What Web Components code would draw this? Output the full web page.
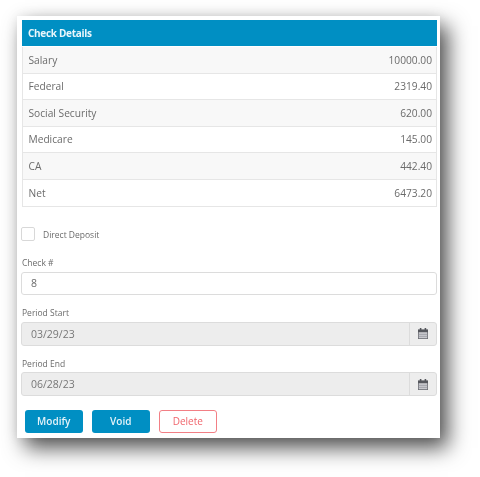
<!DOCTYPE html>
<html>
<head>
<meta charset="utf-8">
<style>
  html, body { margin: 0; padding: 0; background: #fff; }
  body { width: 480px; height: 477px; overflow: hidden; font-family: "Open Sans", "Liberation Sans", sans-serif; }
</style>
</head>
<body>
<check-panel>
  <details-table title-text="Check Details">
    <detail-row label="Salary" value="10000.00"></detail-row>
    <detail-row label="Federal" value="2319.40"></detail-row>
    <detail-row label="Social Security" value="620.00"></detail-row>
    <detail-row label="Medicare" value="145.00"></detail-row>
    <detail-row label="CA" value="442.40"></detail-row>
    <detail-row label="Net" value="6473.20" last></detail-row>
  </details-table>
  <check-box label="Direct Deposit"></check-box>
  <text-field label="Check #" value="8"></text-field>
  <date-field label="Period Start" value="03/29/23"></date-field>
  <date-field label="Period End" value="06/28/23"></date-field>
  <button-row>
    <app-button>Modify</app-button>
    <app-button>Void</app-button>
    <app-button kind="danger">Delete</app-button>
  </button-row>
</check-panel>

<script>
class CheckPanel extends HTMLElement {
  constructor () {
    super()
    this.shadow = this.attachShadow({ mode: 'open' })
  }

  connectedCallback () {
    this.shadow.innerHTML = /* html */`
      <style>
        :host{
          display: block;
          margin: 16px 0 0 17px;
          width: 423px;
          height: 422px;
          box-sizing: border-box;
          padding: 4px 3px 0 4px;
          background: #fff;
          box-shadow: 8px 10px 20px rgba(0, 0, 0, 0.68), 0 0 12px rgba(0, 0, 0, 0.08);
          font-family: "Open Sans", "Liberation Sans", sans-serif;
        }
        .inner{
          display: flex;
          flex-direction: column;
          filter: blur(0.35px);
        }
      </style>
      <div class="inner"><slot></slot></div>
    `
  }
}

class DetailsTable extends HTMLElement {
  constructor () {
    super()
    this.shadow = this.attachShadow({ mode: 'open' })
  }

  connectedCallback () {
    this.shadow.innerHTML = /* html */`
      <style>
        :host{
          display: block;
          margin-left: 1px;
        }
        .header{
          background: #008fc3;
          color: #eaf6fb;
          font-size: 10px;
          font-weight: 700;
          letter-spacing: -0.3px;
          height: 26px;
          line-height: 27px;
          padding-left: 6px;
          margin-bottom: 1px;
        }
        .body{
          border: solid #e6e6e6;
          border-width: 0 1px 1px 1px;
        }
        ::slotted(detail-row:nth-child(odd)){
          background: #f8f8f8;
        }
      </style>
      <div class="header">${this.getAttribute('title-text')}</div>
      <div class="body"><slot></slot></div>
    `
  }
}

class DetailRow extends HTMLElement {
  constructor () {
    super()
    this.shadow = this.attachShadow({ mode: 'open' })
  }

  connectedCallback () {
    this.shadow.innerHTML = /* html */`
      <style>
        :host{
          display: flex;
          justify-content: space-between;
          align-items: center;
          box-sizing: border-box;
          height: 26.5px;
          padding: 0 4px 0 5.5px;
          border-bottom: 1px solid #e6e6e6;
          color: #6b6b6b;
          font-size: 10.2px;
        }
        :host([last]){
          border-bottom: 0;
        }
      </style>
      <span>${this.getAttribute('label')}</span>
      <span>${this.getAttribute('value')}</span>
    `
  }
}

class CheckBox extends HTMLElement {
  constructor () {
    super()
    this.shadow = this.attachShadow({ mode: 'open' })
  }

  connectedCallback () {
    this.shadow.innerHTML = /* html */`
      <style>
        :host{
          display: flex;
          align-items: center;
          gap: 8px;
          margin-top: 20px;
          height: 14px;
          color: #6b6b6b;
          font-size: 8.5px;
        }
        .box{
          box-sizing: border-box;
          width: 14px;
          height: 14px;
          border: 1px solid #d8d8d8;
          border-radius: 2px;
          background: #fff;
        }
      </style>
      <div class="box"></div>
      <span>${this.getAttribute('label')}</span>
    `
  }
}

class TextField extends HTMLElement {
  constructor () {
    super()
    this.shadow = this.attachShadow({ mode: 'open' })
  }

  connectedCallback () {
    this.shadow.innerHTML = /* html */`
      <style>
        :host{
          display: block;
          margin-top: 16px;
          color: #6b6b6b;
        }
        label{
          display: block;
          font-size: 8.5px;
          line-height: 12px;
          margin: 0 0 3px 1px;
        }
        .input{
          box-sizing: border-box;
          height: 23px;
          border: 1px solid #dcdcdc;
          border-radius: 3px;
          background: #fff;
          font-size: 10.5px;
          line-height: 21px;
          padding-left: 9px;
        }
      </style>
      <label>${this.getAttribute('label')}</label>
      <div class="input">${this.getAttribute('value')}</div>
    `
  }
}

class DateField extends HTMLElement {
  constructor () {
    super()
    this.shadow = this.attachShadow({ mode: 'open' })
  }

  connectedCallback () {
    this.shadow.innerHTML = /* html */`
      <style>
        :host{
          display: block;
          margin-top: 12px;
          color: #6b6b6b;
        }
        label{
          display: block;
          font-size: 8.5px;
          line-height: 12px;
          margin: 0 0 2.5px 1px;
        }
        .group{
          display: flex;
          box-sizing: border-box;
          height: 24px;
          border: 1px solid #dcdcdc;
          border-radius: 3px;
          background: #ededed;
        }
        .input{
          flex: 1;
          font-size: 10.5px;
          line-height: 22px;
          padding-left: 9px;
          color: #777;
        }
        .addon{
          width: 26px;
          border-left: 1px solid #dcdcdc;
          display: flex;
          align-items: center;
          justify-content: center;
        }
        svg{
          width: 10px;
          height: 11px;
        }
      </style>
      <label>${this.getAttribute('label')}</label>
      <div class="group">
        <div class="input">${this.getAttribute('value')}</div>
        <div class="addon">
          <svg viewBox="0 0 10 11">
            <rect x="0.4" y="2" width="9.2" height="8.6" fill="#c8c9ce" stroke="#6a6c72" stroke-width="0.8"/>
            <rect x="0" y="1.6" width="10" height="2.6" fill="#55575d"/>
            <rect x="1.8" y="0" width="1.6" height="2.6" fill="#55575d"/>
            <rect x="6.6" y="0" width="1.6" height="2.6" fill="#55575d"/>
            <path d="M0.8 6.4H9.2M0.8 8.4H9.2" stroke="#96979d" stroke-width="0.7"/>
          </svg>
        </div>
      </div>
    `
  }
}

class ButtonRow extends HTMLElement {
  constructor () {
    super()
    this.shadow = this.attachShadow({ mode: 'open' })
  }

  connectedCallback () {
    this.shadow.innerHTML = /* html */`
      <style>
        :host{
          display: flex;
          gap: 9.5px;
          margin: 13.5px 0 0 4px;
        }
      </style>
      <slot></slot>
    `
  }
}

class AppButton extends HTMLElement {
  constructor () {
    super()
    this.shadow = this.attachShadow({ mode: 'open' })
  }

  connectedCallback () {
    this.shadow.innerHTML = /* html */`
      <style>
        :host{
          display: flex;
          align-items: center;
          justify-content: center;
          box-sizing: border-box;
          width: 57.5px;
          height: 23.5px;
          border-radius: 3px;
          background: #008fc3;
          color: #e4f3f9;
          font-size: 10px;
          font-weight: 600;
        }
        :host([kind="danger"]){
          background: #fff;
          border: 1px solid #f27f85;
          color: #f0656c;
          font-weight: 400;
        }
      </style>
      <slot></slot>
    `
  }
}

customElements.define('check-panel', CheckPanel)
customElements.define('details-table', DetailsTable)
customElements.define('detail-row', DetailRow)
customElements.define('check-box', CheckBox)
customElements.define('text-field', TextField)
customElements.define('date-field', DateField)
customElements.define('button-row', ButtonRow)
customElements.define('app-button', AppButton)
</script>
</body>
</html>
